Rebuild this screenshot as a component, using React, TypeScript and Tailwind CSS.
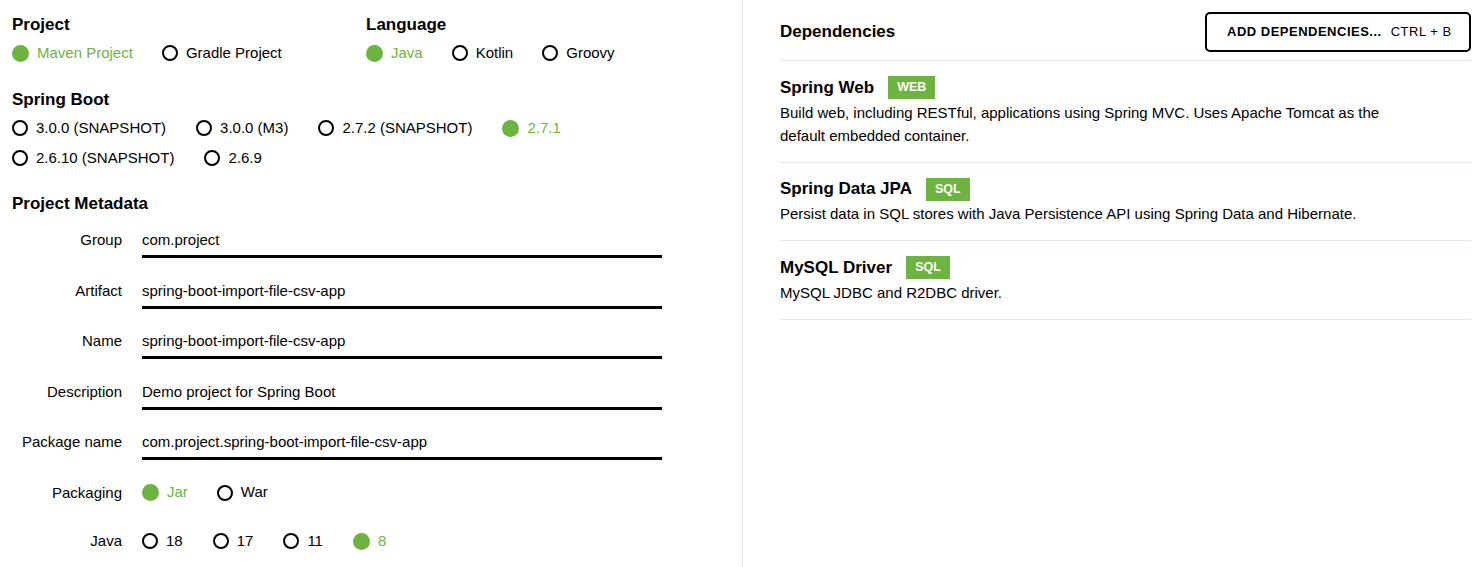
import React from 'react';

const GREEN = '#6db33f';

type RadioProps = { label: string; checked?: boolean };

const Radio: React.FC<RadioProps> = ({ label, checked }) => (
  <div className="flex items-center gap-2 cursor-pointer">
    {checked ? (
      <span className="block w-[17px] h-[17px] rounded-full bg-[#6db33f]" />
    ) : (
      <span className="block w-[16px] h-[16px] rounded-full border-[2.5px] border-black" />
    )}
    <span className={checked ? 'text-[#6db33f]' : 'text-black'}>{label}</span>
  </div>
);

const RadioRow: React.FC<{ items: RadioProps[]; className?: string }> = ({ items, className }) => (
  <div className={`flex items-center text-[15px] ${className ?? ''}`}>
    {items.map((it) => (
      <Radio key={it.label} {...it} />
    ))}
  </div>
);

const fields = [
  { label: 'Group', value: 'com.project' },
  { label: 'Artifact', value: 'spring-boot-import-file-csv-app' },
  { label: 'Name', value: 'spring-boot-import-file-csv-app' },
  { label: 'Description', value: 'Demo project for Spring Boot' },
  { label: 'Package name', value: 'com.project.spring-boot-import-file-csv-app' },
];

const deps = [
  {
    name: 'Spring Web',
    tag: 'WEB',
    desc: 'Build web, including RESTful, applications using Spring MVC. Uses Apache Tomcat as the default embedded container.',
  },
  {
    name: 'Spring Data JPA',
    tag: 'SQL',
    desc: 'Persist data in SQL stores with Java Persistence API using Spring Data and Hibernate.',
  },
  { name: 'MySQL Driver', tag: 'SQL', desc: 'MySQL JDBC and R2DBC driver.' },
];

export default function App() {
  return (
    <div
      className="flex w-[1480px] h-[567px] overflow-hidden bg-white text-black"
      style={{ fontFamily: '"Liberation Sans", Arial, sans-serif' }}
    >
      {/* left: project options */}
      <div className="w-[743px] shrink-0 border-r border-[#e1e8e8] pl-3 pt-[13px]">
        <div className="flex">
          <div className="w-[354px]">
            <h2 className="h-6 leading-6 text-[17px] font-bold">Project</h2>
            <RadioRow
              className="h-8 gap-[29px]"
              items={[{ label: 'Maven Project', checked: true }, { label: 'Gradle Project' }]}
            />
          </div>
          <div>
            <h2 className="h-6 leading-6 text-[17px] font-bold">Language</h2>
            <RadioRow
              className="h-8 gap-[29px]"
              items={[{ label: 'Java', checked: true }, { label: 'Kotlin' }, { label: 'Groovy' }]}
            />
          </div>
        </div>

        <h2 className="mt-[18px] h-[26px] leading-[26px] text-[17px] font-bold">Spring Boot</h2>
        <RadioRow
          className="h-[30px] gap-[30px]"
          items={[
            { label: '3.0.0 (SNAPSHOT)' },
            { label: '3.0.0 (M3)' },
            { label: '2.7.2 (SNAPSHOT)' },
            { label: '2.7.1', checked: true },
          ]}
        />
        <RadioRow
          className="h-[30px] gap-[30px]"
          items={[{ label: '2.6.10 (SNAPSHOT)' }, { label: '2.6.9' }]}
        />

        <h2 className="mt-[18px] h-[26px] leading-[26px] text-[17px] font-bold">Project Metadata</h2>
        {fields.map((f) => (
          <div key={f.label} className="flex h-[50.5px] text-[15px]">
            <label className="w-[110px] pt-[13px] leading-5 text-right">{f.label}</label>
            <div className="ml-5 w-[520px] self-start pt-[13px] pb-[5px] leading-5 border-b-[3px] border-black">
              {f.value}
            </div>
          </div>
        ))}
        <div className="flex h-[50.5px] text-[15px]">
          <label className="w-[110px] pt-[13px] leading-5 text-right">Packaging</label>
          <RadioRow
            className="ml-5 self-start pt-[13px] h-[33px] gap-[29px]"
            items={[{ label: 'Jar', checked: true }, { label: 'War' }]}
          />
        </div>
        <div className="flex h-[50px] text-[15px]">
          <label className="w-[110px] pt-[11px] leading-5 text-right">Java</label>
          <RadioRow
            className="ml-5 self-start pt-[11px] h-[31px] gap-[30px]"
            items={[{ label: '18' }, { label: '17' }, { label: '11' }, { label: '8', checked: true }]}
          />
        </div>
      </div>

      {/* right: dependencies */}
      <div className="flex-1 pl-[37px] pr-[9px]">
        <div className="flex items-center justify-between pt-3 pb-2 border-b border-[#e1e8e8]">
          <h2 className="text-[17px] font-bold">Dependencies</h2>
          <button className="flex items-center h-10 w-[266px] pl-5 border-2 border-black rounded-[5px] text-[13px] tracking-[0.5px]">
            <span className="font-bold">ADD DEPENDENCIES...</span>
            <span className="ml-[9px]">CTRL + B</span>
          </button>
        </div>
        {deps.map((d) => (
          <div key={d.name} className="pt-[15px] pb-[15px] border-b border-[#e1e8e8]">
            <div className="flex items-center h-[23px]">
              <span className="text-[17px] font-bold">{d.name}</span>
              <span
                className="ml-[14px] h-[23px] px-[9px] flex items-center text-white text-[12.5px] font-bold"
                style={{ backgroundColor: GREEN }}
              >
                {d.tag}
              </span>
            </div>
            <p className="mt-[1.5px] max-w-[610px] text-[15px] leading-[23px]">{d.desc}</p>
          </div>
        ))}
      </div>
    </div>
  );
}
